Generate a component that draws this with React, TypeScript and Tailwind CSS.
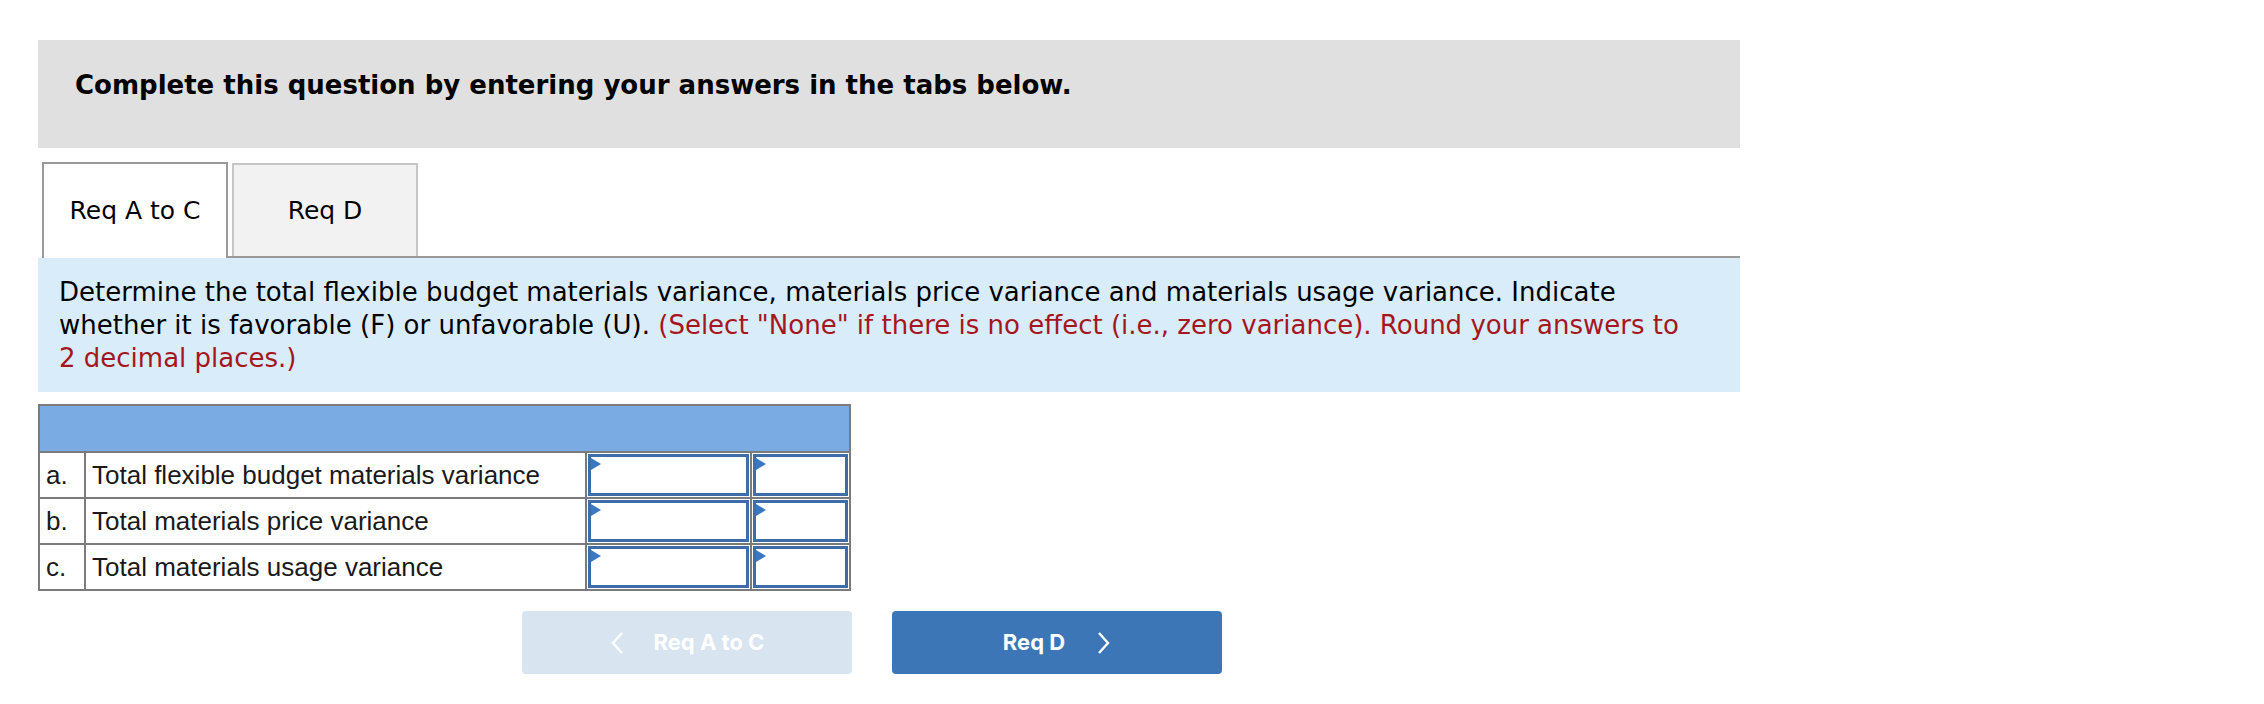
import React from 'react';

const verdana = { fontFamily: '"DejaVu Sans", Verdana, sans-serif' };

const rows = [
    { key: 'a.', label: 'Total flexible budget materials variance' },
    { key: 'b.', label: 'Total materials price variance' },
    { key: 'c.', label: 'Total materials usage variance' },
];

const DropCell = ({ wide }: { wide: boolean }) => (
    <td className={`p-[1px] border-2 border-[#7b7b7b] ${wide ? 'w-[165px]' : 'w-[99px]'}`}>
        <div className="relative h-[42px] border-[3px] border-[#3d6ea9] bg-white">
            <span className="absolute left-0 top-[1px] w-0 h-0 border-y-[6px] border-y-transparent border-l-[10px] border-l-[#3b78c0]" />
        </div>
    </td>
);

export default function App() {
    return (
        <div className="min-h-[704px] w-[2264px] bg-white pt-[40px] pl-[38px]">
            <div className="w-[1702px]">
                <div className="h-[108px] bg-[#e0e0e0] pl-[37px] pt-[29px]">
                    <h2 className="text-[26px] font-bold text-black leading-[32px]" style={verdana}>
                        Complete this question by entering your answers in the tabs below.
                    </h2>
                </div>

                <div className="flex items-end mt-[14px] pl-[4px]">
                    <div
                        className="w-[186px] h-[96px] flex items-center justify-center border-2 border-b-0 border-[#999999] bg-white text-[25px] text-black"
                        style={verdana}
                    >
                        Req A to C
                    </div>
                    <div className="flex flex-1 items-end pl-[4px] border-b-2 border-[#999999]">
                        <div
                            className="w-[186px] h-[93px] flex items-center justify-center border-2 border-b-0 border-[#c6c6c6] bg-[#f2f2f2] text-[25px] text-black"
                            style={verdana}
                        >
                            Req D
                        </div>
                    </div>
                </div>

                <div className="bg-[#d9ecf9] pl-[21px] pr-[40px] pt-[18px] pb-[17px] text-[26px] leading-[33px] text-black" style={verdana}>
                    Determine the total flexible budget materials variance, materials price variance and materials usage variance. Indicate
                    whether it is favorable (F) or unfavorable (U).{' '}
                    <span className="text-[#a6161f]">
                        (Select "None" if there is no effect (i.e., zero variance). Round your answers to 2 decimal places.)
                    </span>
                </div>

                <table
                    className="mt-[12px] border-collapse border-2 border-[#7b7b7b] text-[26px] text-[#1a1a1a]"
                    style={{ fontFamily: '"Liberation Sans", Arial, sans-serif' }}
                >
                    <thead>
                        <tr>
                            <th colSpan={4} className="h-[47px] bg-[#7aabe2] border-2 border-[#7b7b7b]" />
                        </tr>
                    </thead>
                    <tbody>
                        {rows.map((row) => (
                            <tr key={row.key} className="h-[46px]">
                                <td className="w-[46px] border-2 border-[#7b7b7b] pl-[6px] pr-[4px] leading-none">{row.key}</td>
                                <td className="w-[501px] border-2 border-[#7b7b7b] pl-[6px] leading-none whitespace-nowrap">{row.label}</td>
                                <DropCell wide={true} />
                                <DropCell wide={false} />
                            </tr>
                        ))}
                    </tbody>
                </table>

                <div className="flex gap-[40px] mt-[20px] ml-[484px]" style={{ fontFamily: 'Inter, Roboto, sans-serif' }}>
                    <button className="w-[330px] h-[63px] rounded-[4px] bg-[#d9e4f1] text-white text-[22px] font-bold flex items-center justify-center gap-[30px]">
                        <svg width="14" height="24" viewBox="0 0 14 24" fill="none" stroke="white" strokeWidth="2.4">
                            <path d="M12 2 L3 12 L12 22" />
                        </svg>
                        <span>Req A to C</span>
                    </button>
                    <button className="w-[330px] h-[63px] rounded-[4px] bg-[#3c76b7] text-white text-[22px] font-bold flex items-center justify-center gap-[32px]">
                        <span>Req D</span>
                        <svg width="14" height="24" viewBox="0 0 14 24" fill="none" stroke="white" strokeWidth="2.4">
                            <path d="M2 2 L11 12 L2 22" />
                        </svg>
                    </button>
                </div>
            </div>
        </div>
    );
}
